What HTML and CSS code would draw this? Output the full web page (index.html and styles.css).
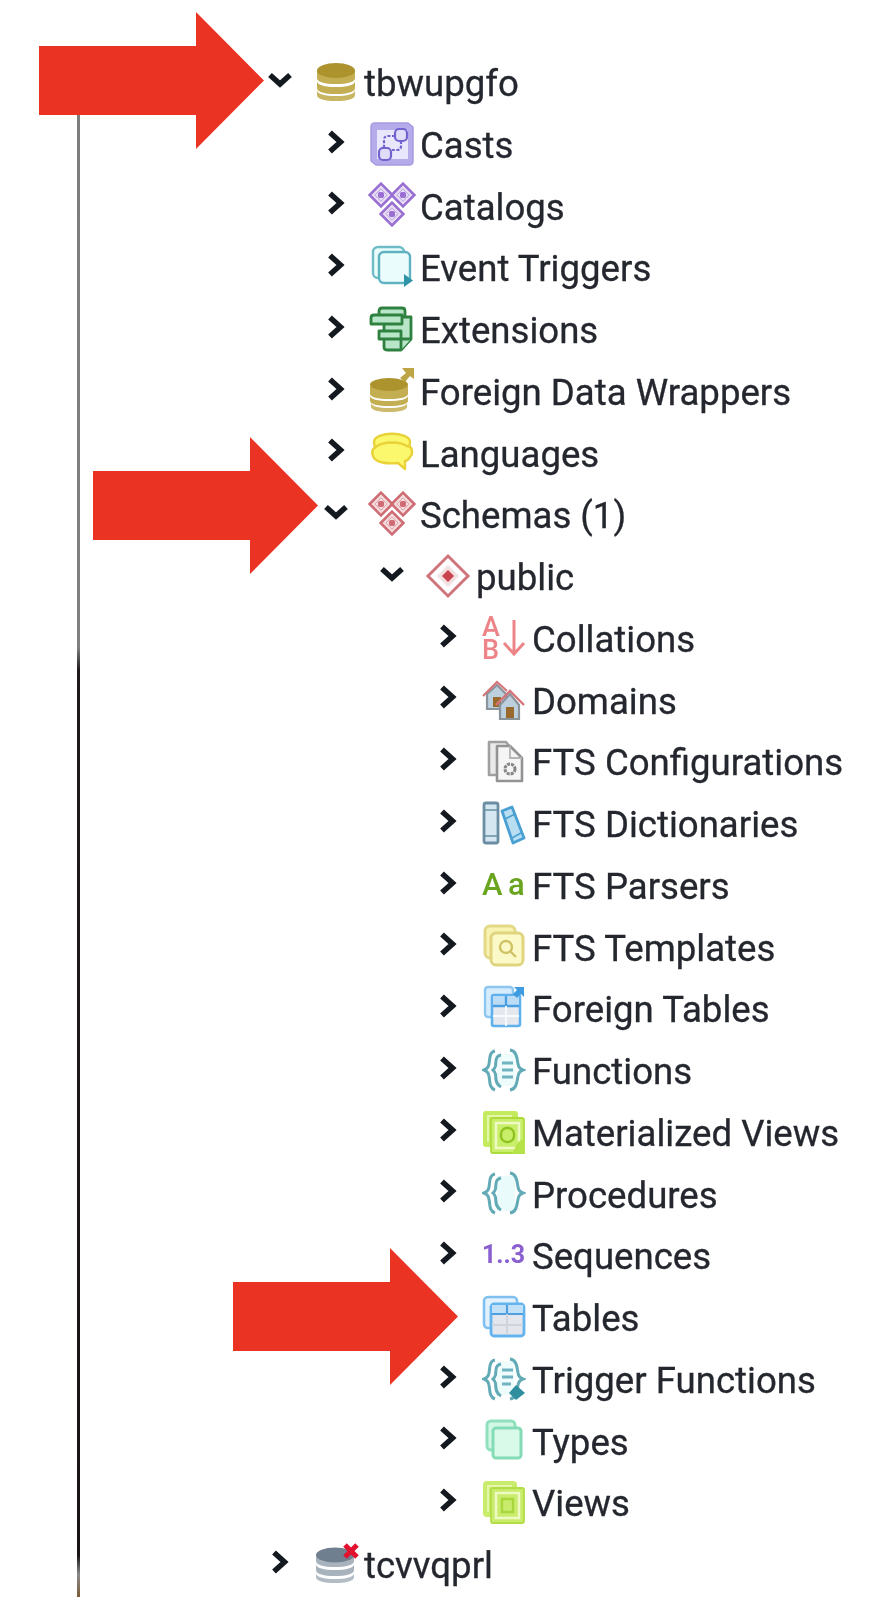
FILE: index.html
```html
<!DOCTYPE html>
<html lang="en">
<head>
<meta charset="utf-8">
<title>Object tree</title>
<link rel="stylesheet" href="styles.css">
</head>
<body>
<svg class="defs" width="0" height="0" aria-hidden="true">
  <defs>
    <symbol id="chev-r" viewBox="0 0 24 24"><path d="M6 2.500 16.500 12 6 21.500" fill="none" stroke="currentColor" stroke-width="5.500"/></symbol>
    <symbol id="chev-d" viewBox="0 0 24 24"><path d="M2 7 12 16 22 7" fill="none" stroke="currentColor" stroke-width="5.500"/></symbol>
    <symbol id="dia" viewBox="0 0 24 24"><path d="M12 1.500 22.500 12 12 22.500 1.500 12Z" fill="currentColor" fill-opacity=".22" stroke="currentColor" stroke-width="2.400"/><path d="M12 6.500 17.500 12 12 17.500 6.500 12Z" fill="#fff" fill-opacity=".75" stroke="currentColor" stroke-width="1" stroke-opacity=".5"/><circle cx="12" cy="12" r="3" fill="currentColor"/></symbol>
    <symbol id="brace" viewBox="0 0 44 44"><g fill="none" stroke="#63aab7" stroke-width="3"><path d="M13 3C7 4 8 11 7 16 6.500 19 5 21 2 22 5 23 6.500 25 7 28 8 33 7 40 13 42"/><path d="M19 7C13 8 14 14 13.500 18 13 20 12 21 11 22 12 23 13 24 13.500 26 14 30 13 36 19 39"/><path d="M28 2C35 3 35 11 36 16 36.500 19 38 21 41 22 38 23 36.500 25 36 28 35 33 35 41 28 42"/></g></symbol>
  </defs>
</svg>

<main class="page">
  <div class="rail"></div>
  <ul class="tree">
    <li class="row l0">
      <svg class="chev down"><use href="#chev-d"/></svg>
      <svg class="icon" viewBox="0 0 44 44"><path d="M3 21v7c0 4 8 6 19 6s19-2 19-6v-7c0 4-8 6-19 6S3 25 3 21Z" fill="#c4ae52"/><path d="M3 30v5c0 4 8 6 19 6s19-2 19-6v-5c0 4-8 6-19 6S3 34 3 30Z" fill="#c9b662"/><path d="M3 11v7c0 4 8 6 19 6s19-2 19-6v-7Z" fill="#c4ae52"/><ellipse cx="22" cy="10.500" rx="19" ry="7.500" fill="#ad932d"/></svg>
      <span class="label">tbwupgfo</span>
    </li>
    <li class="row l1">
      <svg class="chev right"><use href="#chev-r"/></svg>
      <svg class="icon" viewBox="0 0 44 44"><path d="M1 5q0-4 4-4h33l5 4v34q0 4-4 4H6l-5-4Z" fill="#b5aaea" stroke="#a79be3" stroke-width="1.500"/><rect x="7" y="8" width="31" height="29" fill="#e9e7fb"/><rect x="25" y="7" width="12" height="12" rx="4" fill="#e1ddf9" stroke="#7264cf" stroke-width="2.200"/><rect x="9" y="26" width="12" height="12" rx="4" fill="#e1ddf9" stroke="#7264cf" stroke-width="2.200"/><path d="M25 14H18Q14 14 14 18V26M31 19V24Q31 28 27 28H22" fill="none" stroke="#7264cf" stroke-width="2.200" stroke-dasharray="3 1.500"/></svg>
      <span class="label">Casts</span>
    </li>
    <li class="row l1">
      <svg class="chev right"><use href="#chev-r"/></svg>
      <svg class="icon c-purple" viewBox="0 0 44 44"><use href="#dia" x="-2" y="-1" width="26" height="26"/><use href="#dia" x="20" y="-1" width="26" height="26"/><use href="#dia" x="9" y="18" width="26" height="26"/></svg>
      <span class="label">Catalogs</span>
    </li>
    <li class="row l1">
      <svg class="chev right"><use href="#chev-r"/></svg>
      <svg class="icon" viewBox="0 0 44 44"><rect x="3" y="2" width="31" height="31" rx="5" fill="#eafcfc" stroke="#6fbcc7" stroke-width="2.400"/><rect x="9" y="7" width="31" height="31" rx="5" fill="#eafcfc" stroke="#5fb3c0" stroke-width="2.400"/><path d="M34 35v-6l9 6.500-9 6.500Z" fill="#2f95a6"/></svg>
      <span class="label">Event Triggers</span>
    </li>
    <li class="row l1">
      <svg class="chev right"><use href="#chev-r"/></svg>
      <svg class="icon" viewBox="0 0 44 44"><g fill="#b9e6c9" stroke="#2f8140" stroke-width="2.800" stroke-linejoin="round"><path d="M9 4q0-3 3-3h20q3 0 3 3v6H9Z"/><path d="M14 10H41v22l-10 11H17q-3 0-3-3Z"/><path d="M1 11q0-3 3-3h28v9H1Z"/><path d="M9 24H31v8H9Z"/><path d="M31 43V32H41"/></g></svg>
      <span class="label">Extensions</span>
    </li>
    <li class="row l1">
      <svg class="chev right"><use href="#chev-r"/></svg>
      <svg class="icon" viewBox="0 0 44 44"><path d="M0 17v8c0 3 8 5 19 5s19-2 19-5v-8Z" fill="#c4ae52"/><path d="M0 27v5c0 3 8 5 19 5s19-2 19-5v-5c0 3-8 5-19 5S0 30 0 27Z" fill="#c4ae52"/><path d="M1 34v4c0 3 8 5 18 5s18-2 18-5v-4c0 3-8 5-18 5S1 37 1 34Z" fill="#cdbb6b"/><ellipse cx="19" cy="15.500" rx="19" ry="6.500" fill="#ad932d"/><path d="M32-1H44V10L40 7 35 13 30 9 36 4Z" fill="#bda445"/></svg>
      <span class="label">Foreign Data Wrappers</span>
    </li>
    <li class="row l1">
      <svg class="chev right"><use href="#chev-r"/></svg>
      <svg class="icon" viewBox="0 0 44 44"><path d="M4 12C4 1 40 1 40 12 40 14 40 15 39 16 43 19 43 24 40 27 38 30 36 31 35 31L35 39 28 33C18 34 5 33 3 26 1 21 3 18 6 17 4 16 4 14 4 12Z" fill="#fbf86e" stroke="#e9d238" stroke-width="2.400" stroke-linejoin="round"/><path d="M5 17C14 11 30 11 39 17" fill="none" stroke="#e9d238" stroke-width="2.400"/></svg>
      <span class="label">Languages</span>
    </li>
    <li class="row l1">
      <svg class="chev down"><use href="#chev-d"/></svg>
      <svg class="icon c-rose" viewBox="0 0 44 44"><use href="#dia" x="-2" y="-1" width="26" height="26"/><use href="#dia" x="20" y="-1" width="26" height="26"/><use href="#dia" x="9" y="18" width="26" height="26"/></svg>
      <span class="label">Schemas (1)</span>
    </li>
    <li class="row l2">
      <svg class="chev down"><use href="#chev-d"/></svg>
      <svg class="icon" viewBox="0 0 44 44"><path d="M22 2 42 22 22 42 2 22Z" fill="#fff" stroke="#d0757c" stroke-width="3"/><path d="M22 11 33 22 22 33 11 22Z" fill="#f6dfe0"/><path d="M22 16 28 22 22 28 16 22Z" fill="#c8434d"/></svg>
      <span class="label">public</span>
    </li>
    <li class="row l3">
      <svg class="chev right"><use href="#chev-r"/></svg>
      <svg class="icon" viewBox="0 0 44 44"><text class="glyph ab"><tspan x="0" y="20">A</tspan><tspan x="0" y="43">B</tspan></text><path d="M32 4V37M22 27 32 38 42 27" fill="none" stroke="#ec8488" stroke-width="3"/></svg>
      <span class="label">Collations</span>
    </li>
    <li class="row l3">
      <svg class="chev right"><use href="#chev-r"/></svg>
      <svg class="icon" viewBox="0 0 44 44"><path d="M5 17V32H24V17L15 8Z" fill="#bcd0de" stroke="#8b949b" stroke-width="2.200"/><rect x="11" y="20" width="8" height="10" fill="#9a6a2c"/><path d="M1 19 15 5 25 14" fill="none" stroke="#d4757a" stroke-width="2.200"/><path d="M18 28V42H37V28L28 17Z" fill="#bcd0de" stroke="#8b949b" stroke-width="2.200"/><rect x="24" y="30" width="8" height="11" fill="#9a6a2c"/><path d="M14 28 28 14 42 28" fill="none" stroke="#d4757a" stroke-width="2.400"/></svg>
      <span class="label">Domains</span>
    </li>
    <li class="row l3">
      <svg class="chev right"><use href="#chev-r"/></svg>
      <svg class="icon" viewBox="0 0 44 44"><path d="M7 3H24L28 8V36H7Z" fill="#eaeaea" stroke="#a0a0a0" stroke-width="2.600" stroke-linejoin="round"/><path d="M15 7H28L40 19V42H15Z" fill="#f5f5f5" stroke="#939393" stroke-width="2.600" stroke-linejoin="round"/><path d="M28 7V19H40" fill="none" stroke="#b5b5b5" stroke-width="1.800"/><circle cx="28" cy="30" r="5" fill="none" stroke="#858585" stroke-width="3" stroke-dasharray="3 1"/></svg>
      <span class="label">FTS Configurations</span>
    </li>
    <li class="row l3">
      <svg class="chev right"><use href="#chev-r"/></svg>
      <svg class="icon" viewBox="0 0 44 44"><rect x="2" y="2" width="14" height="40" rx="2" fill="#d5e7f1" stroke="#6b8ea3" stroke-width="2.800"/><path d="M2 9H16M2 35H16" stroke="#6b8ea3" stroke-width="1.600"/><path d="M20 10 30 6 42 37 31 42Z" fill="#b9def2" stroke="#4aa0d2" stroke-width="2.800" stroke-linejoin="round"/><path d="M23 18 33 13M30 37 39 32" stroke="#4aa0d2" stroke-width="1.600"/></svg>
      <span class="label">FTS Dictionaries</span>
    </li>
    <li class="row l3">
      <svg class="chev right"><use href="#chev-r"/></svg>
      <svg class="icon" viewBox="0 0 44 44"><text class="glyph aa" x="0" y="32">A</text><text class="glyph aa" x="26" y="32">a</text></svg>
      <span class="label">FTS Parsers</span>
    </li>
    <li class="row l3">
      <svg class="chev right"><use href="#chev-r"/></svg>
      <svg class="icon" viewBox="0 0 44 44"><rect x="3" y="2" width="30" height="32" rx="5" fill="#f8f3b0" stroke="#e3d888" stroke-width="3"/><rect x="9" y="9" width="32" height="32" rx="5" fill="#fcf9c8" stroke="#e0d47e" stroke-width="3"/><circle cx="24" cy="23" r="6" fill="none" stroke="#cfc263" stroke-width="2.400"/><path d="M28 27 34 33" stroke="#cfc263" stroke-width="2.400"/></svg>
      <span class="label">FTS Templates</span>
    </li>
    <li class="row l3">
      <svg class="chev right"><use href="#chev-r"/></svg>
      <svg class="icon" viewBox="0 0 44 44"><rect x="3" y="1" width="28" height="30" rx="3" fill="#d6ebfb" stroke="#8cc7f2" stroke-width="2.400"/><rect x="10" y="9" width="28" height="31" rx="2" fill="#e5e9ef" stroke="#5fb1ee" stroke-width="2.600"/><path d="M11 10H37V20H11Z" fill="#bcdcf6"/><path d="M11 20H37M24 10V20" stroke="#4a9fe2" stroke-width="2.400"/><path d="M11 30H37M24 20V40" stroke="#fafbfd" stroke-width="1.800"/><path d="M32 1H42V11L39 8 35 12 31 8 35 4Z" fill="#3f9be0"/></svg>
      <span class="label">Foreign Tables</span>
    </li>
    <li class="row l3">
      <svg class="chev right"><use href="#chev-r"/></svg>
      <svg class="icon" viewBox="0 0 44 44"><path d="M15 6H33V38H15Z" fill="#effcfc"/><use href="#brace"/><path d="M20 15H31M20 22H31M20 29H31" stroke="#6fb4c0" stroke-width="3"/></svg>
      <span class="label">Functions</span>
    </li>
    <li class="row l3">
      <svg class="chev right"><use href="#chev-r"/></svg>
      <svg class="icon" viewBox="0 0 44 44"><rect x="1" y="1" width="35" height="36" rx="3" fill="#c4eb5e"/><path d="M6 32V6H30" fill="none" stroke="#e3f6ac" stroke-width="2"/><rect x="9" y="8" width="33" height="35" rx="2" fill="#c9ee6a" stroke="#aedb3c" stroke-width="1.800"/><rect x="14" y="13" width="23" height="25" fill="none" stroke="#eef9c4" stroke-width="2.500"/><rect x="19" y="18" width="13" height="14" rx="6" fill="none" stroke="#8fc322" stroke-width="2.400"/><path d="M36 32 43 28V44H30Z" fill="#b6e34a"/></svg>
      <span class="label">Materialized Views</span>
    </li>
    <li class="row l3">
      <svg class="chev right"><use href="#chev-r"/></svg>
      <svg class="icon" viewBox="0 0 44 44"><path d="M15 5H33V40H15Z" fill="#e9fbfb"/><use href="#brace"/></svg>
      <span class="label">Procedures</span>
    </li>
    <li class="row l3">
      <svg class="chev right"><use href="#chev-r"/></svg>
      <svg class="icon" viewBox="0 0 44 44"><text class="glyph seq" x="0" y="30">1..3</text></svg>
      <span class="label">Sequences</span>
    </li>
    <li class="row l3">
      <span class="chev"></span>
      <svg class="icon" viewBox="0 0 44 44"><rect x="2" y="2" width="33" height="31" rx="4" fill="#e2f1fc" stroke="#7fc0f0" stroke-width="2.600"/><rect x="9" y="9" width="33" height="32" rx="3" fill="#e3e6ec" stroke="#63b3ee" stroke-width="2.800"/><path d="M10 10H41V19H10Z" fill="#c2e0f8"/><path d="M10 19H41M25 10V19" stroke="#4f9fe0" stroke-width="2.200"/><path d="M10 30H41M25 19V40" stroke="#cfd3da" stroke-width="2"/></svg>
      <span class="label">Tables</span>
    </li>
    <li class="row l3">
      <svg class="chev right"><use href="#chev-r"/></svg>
      <svg class="icon" viewBox="0 0 44 44"><path d="M15 4H32V38H15Z" fill="#effcfc"/><use href="#brace"/><path d="M20 13H31M20 20H31M20 27H29" stroke="#6fb4c0" stroke-width="3"/><path d="M34 28 43 36 34 43 27 36Z" fill="#2f8f9f"/></svg>
      <span class="label">Trigger Functions</span>
    </li>
    <li class="row l3">
      <svg class="chev right"><use href="#chev-r"/></svg>
      <svg class="icon" viewBox="0 0 44 44"><rect x="5" y="3" width="28" height="29" rx="4" fill="#d2f8e5" stroke="#8fe0bd" stroke-width="3"/><rect x="11" y="10" width="28" height="30" rx="3" fill="#d9f9e9" stroke="#84dcb6" stroke-width="3"/></svg>
      <span class="label">Types</span>
    </li>
    <li class="row l3">
      <svg class="chev right"><use href="#chev-r"/></svg>
      <svg class="icon" viewBox="0 0 44 44"><rect x="1" y="1" width="34" height="36" rx="4" fill="#c9ec6c"/><path d="M6 32V6H30" fill="none" stroke="#e3f6ac" stroke-width="2"/><rect x="9" y="8" width="33" height="35" rx="2" fill="#c9ec6c" stroke="#b3dd45" stroke-width="1.800"/><rect x="14" y="13" width="23" height="25" fill="none" stroke="#eef9c4" stroke-width="2.500"/><rect x="20" y="19" width="11" height="13" fill="none" stroke="#a9d63c" stroke-width="2.400"/></svg>
      <span class="label">Views</span>
    </li>
    <li class="row l0">
      <svg class="chev right"><use href="#chev-r"/></svg>
      <svg class="icon" viewBox="0 0 44 44"><path d="M2 22v6c0 4 8 6 19 6s19-2 19-6v-6c0 4-8 6-19 6S2 26 2 22Z" fill="#a9b3bd"/><path d="M2 31v4c0 4 8 6 19 6s19-2 19-6v-4c0 4-8 6-19 6S2 35 2 31Z" fill="#b3bcc5"/><path d="M2 13v6c0 4 8 6 19 6s19-2 19-6v-6Z" fill="#a9b3bd"/><ellipse cx="21" cy="13" rx="19" ry="7.500" fill="#6f7f8f"/><path d="M31 3 43 15M43 3 31 15" stroke="#e0102e" stroke-width="5"/></svg>
      <span class="label">tcvvqprl</span>
    </li>
  </ul>
</main>

<svg class="arrow a1" viewBox="0 0 225 137"><path d="M0 34H157V0L225 68.500 157 137V103H0Z"/></svg>
<svg class="arrow a2" viewBox="0 0 225 137"><path d="M0 34H157V0L225 68.500 157 137V103H0Z"/></svg>
<svg class="arrow a3" viewBox="0 0 225 137"><path d="M0 34H157V0L225 68.500 157 137V103H0Z"/></svg>
</body>
</html>
```
FILE: styles.css
```css
html, body {
  margin: 0;
  padding: 0;
  background: #fff;
}

body {
  position: relative;
  height: 1602px;
  overflow: hidden;
}

.defs {
  display: block;
  height: 0;
}

.page {
  display: flex;
  align-items: flex-start;
  padding-left: 77px;
}

.rail {
  flex: none;
  width: 2.5px;
  height: 1483px;
  margin-top: 114px;
  background: linear-gradient(to bottom,
    #7d7d7d 0, #808080 36%, #1e1a1a 37.500%, #181414 97.200%,
    #8a8a8a 98.500%, #7b5a35 100%);
}

.tree {
  flex: none;
  list-style: none;
  margin: 0;
  padding: 51px 0 0 182.500px;
  filter: blur(.75px);
  font-family: Roboto, "Liberation Sans", sans-serif;
  font-size: 36.6px;
  color: #24272e;
}

.row {
  display: flex;
  align-items: center;
  height: 61.750px;
  white-space: nowrap;
}

.l1 { margin-left: 56px; }
.l2 { margin-left: 112px; }
.l3 { margin-left: 168px; }

.chev {
  flex: none;
  width: 24px;
  height: 24px;
  margin: -4px 22px 0 6px;
  color: #14181f;
}

.icon {
  flex: none;
  width: 44px;
  height: 44px;
  overflow: visible;
}

.label {
  margin: 5px 0 0 6px;
  line-height: 1;
  -webkit-text-stroke: .3px #24272e;
}

.c-purple { color: #9a6fd2; }
.c-rose { color: #cf6c74; }

.glyph {
  font-family: Roboto, "Liberation Sans", sans-serif;
  font-weight: 500;
}

.ab { font-size: 27px; fill: #ec8488; }
.aa { font-size: 31px; fill: #6aa51f; }
.seq { font-size: 25px; font-weight: 700; fill: #8a5fd0; }

.arrow {
  position: absolute;
  width: 225px;
  height: 137px;
  fill: #eb3323;
}

.a1 { left: 39px; top: 12px; }
.a2 { left: 93px; top: 437px; }
.a3 { left: 233px; top: 1248px; }
```
